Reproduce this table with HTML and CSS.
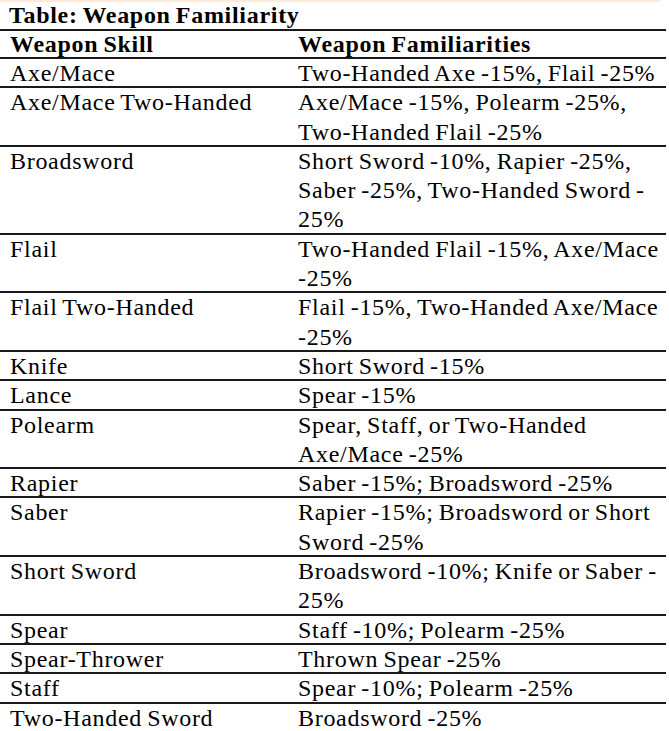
FILE: index.html
```html
<!DOCTYPE html>
<html>
<head>
<meta charset="utf-8">
<link rel="stylesheet" href="styles.css">
</head>
<body>
<div class="strip"></div>
<table class="fam">
  <tr class="title"><th colspan="2">Table: Weapon Familiarity</th></tr>
  <tr class="head"><th class="c1">Weapon Skill</th><th class="c2">Weapon Familiarities</th></tr>
  <tr><td class="c1">Axe/Mace</td><td class="c2">Two-Handed Axe -15%, Flail -25%</td></tr>
  <tr><td class="c1">Axe/Mace Two-Handed</td><td class="c2">Axe/Mace -15%, Polearm -25%,<br>Two-Handed Flail -25%</td></tr>
  <tr><td class="c1">Broadsword</td><td class="c2">Short Sword -10%, Rapier -25%,<br>Saber -25%, Two-Handed Sword -<br>25%</td></tr>
  <tr><td class="c1">Flail</td><td class="c2">Two-Handed Flail -15%, Axe/Mace<br>-25%</td></tr>
  <tr><td class="c1">Flail Two-Handed</td><td class="c2">Flail -15%, Two-Handed Axe/Mace<br>-25%</td></tr>
  <tr><td class="c1">Knife</td><td class="c2">Short Sword -15%</td></tr>
  <tr><td class="c1">Lance</td><td class="c2">Spear -15%</td></tr>
  <tr><td class="c1">Polearm</td><td class="c2">Spear, Staff, or Two-Handed<br>Axe/Mace -25%</td></tr>
  <tr><td class="c1">Rapier</td><td class="c2">Saber -15%; Broadsword -25%</td></tr>
  <tr><td class="c1">Saber</td><td class="c2">Rapier -15%; Broadsword or Short<br>Sword -25%</td></tr>
  <tr><td class="c1">Short Sword</td><td class="c2">Broadsword -10%; Knife or Saber -<br>25%</td></tr>
  <tr><td class="c1">Spear</td><td class="c2">Staff -10%; Polearm -25%</td></tr>
  <tr><td class="c1">Spear-Thrower</td><td class="c2">Thrown Spear -25%</td></tr>
  <tr><td class="c1">Staff</td><td class="c2">Spear -10%; Polearm -25%</td></tr>
  <tr class="last"><td class="c1">Two-Handed Sword</td><td class="c2">Broadsword -25%</td></tr>
</table>
</body>
</html>
```

FILE: styles.css
```css
html, body {
  margin: 0;
  padding: 0;
  background: #fff;
}
.strip {
  width: 660px;
  height: 2px;
  background: #fdeada;
}
.fam {
  width: 666px;
  border-collapse: collapse;
  border-spacing: 0;
  font-family: "Liberation Serif", "Times New Roman", Times, serif;
  font-size: 24px;
  letter-spacing: 0.7px;
  word-spacing: -1.5px;
  line-height: 29.3px;
  color: #000;
  white-space: nowrap;
}
.fam th, .fam td {
  padding: 0;
  text-align: left;
  vertical-align: top;
  box-shadow: inset 0 -2px 0 #1a1a1a;
}
.fam .last td {
  box-shadow: none;
}
.fam .title th {
  padding-left: 9px;
  height: 29px;
  line-height: 27px;
}
.fam .head th {
  height: 28px;
  line-height: 26px;
}
.fam .c1 {
  width: 278px;
  padding-left: 10px;
}
.fam .c2 {
  padding-left: 10px;
}
.fam th {
  font-weight: bold;
}
```
